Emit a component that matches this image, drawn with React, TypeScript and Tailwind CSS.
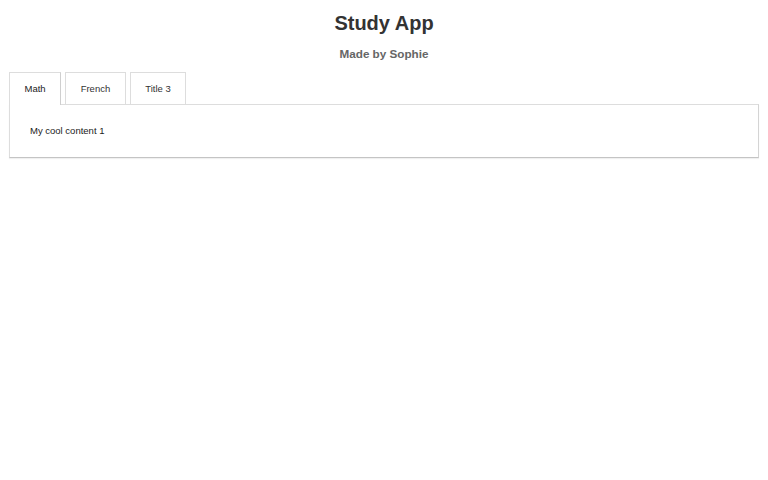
import React, { useState } from "react";

const tabs = [
  { title: "Math", content: "My cool content 1" },
  { title: "French", content: "My cool content 2" },
  { title: "Title 3", content: "My cool content 3" },
];

export default function App() {
  const [active, setActive] = useState(0);
  return (
    <div className="min-h-[480px] bg-white font-['Liberation_Sans',Arial,sans-serif]">
      <div className="flex flex-col items-center">
        <h1 className="mt-[11px] text-[20px] font-bold leading-[24px] text-[#333333]">Study App</h1>
        <p className="mt-[12px] text-[11.7px] font-bold leading-[14px] text-[#666666]">Made by Sophie</p>
      </div>
      <div className="mx-[9px] mt-[11px]">
        <div className="flex gap-[4px]">
          {tabs.map((t, i) => (
            <button
              key={t.title}
              onClick={() => setActive(i)}
              className={
                i === active
                  ? "relative z-10 -mb-px h-[33px] border border-b-0 border-[#dddddd] border-r-[#cfcfcf] bg-white px-[14.5px] text-[9.5px] leading-[12px] text-[#222222]"
                  : "h-[32px] border border-b-0 border-[#dddddd] bg-white px-[14.5px] text-[9.5px] leading-[12px] text-[#333333]"
              }
            >
              {t.title}
            </button>
          ))}
        </div>
        <div className="border border-[#dddddd] border-b-[#c4c4c4] border-r-[#d4d4d4] bg-white px-[20px] pt-[20px] pb-[20px] shadow-[0_1px_1px_rgba(0,0,0,0.06)]">
          <p className="text-[9.5px] leading-[12px] text-[#222222]">{tabs[active].content}</p>
        </div>
      </div>
    </div>
  );
}
